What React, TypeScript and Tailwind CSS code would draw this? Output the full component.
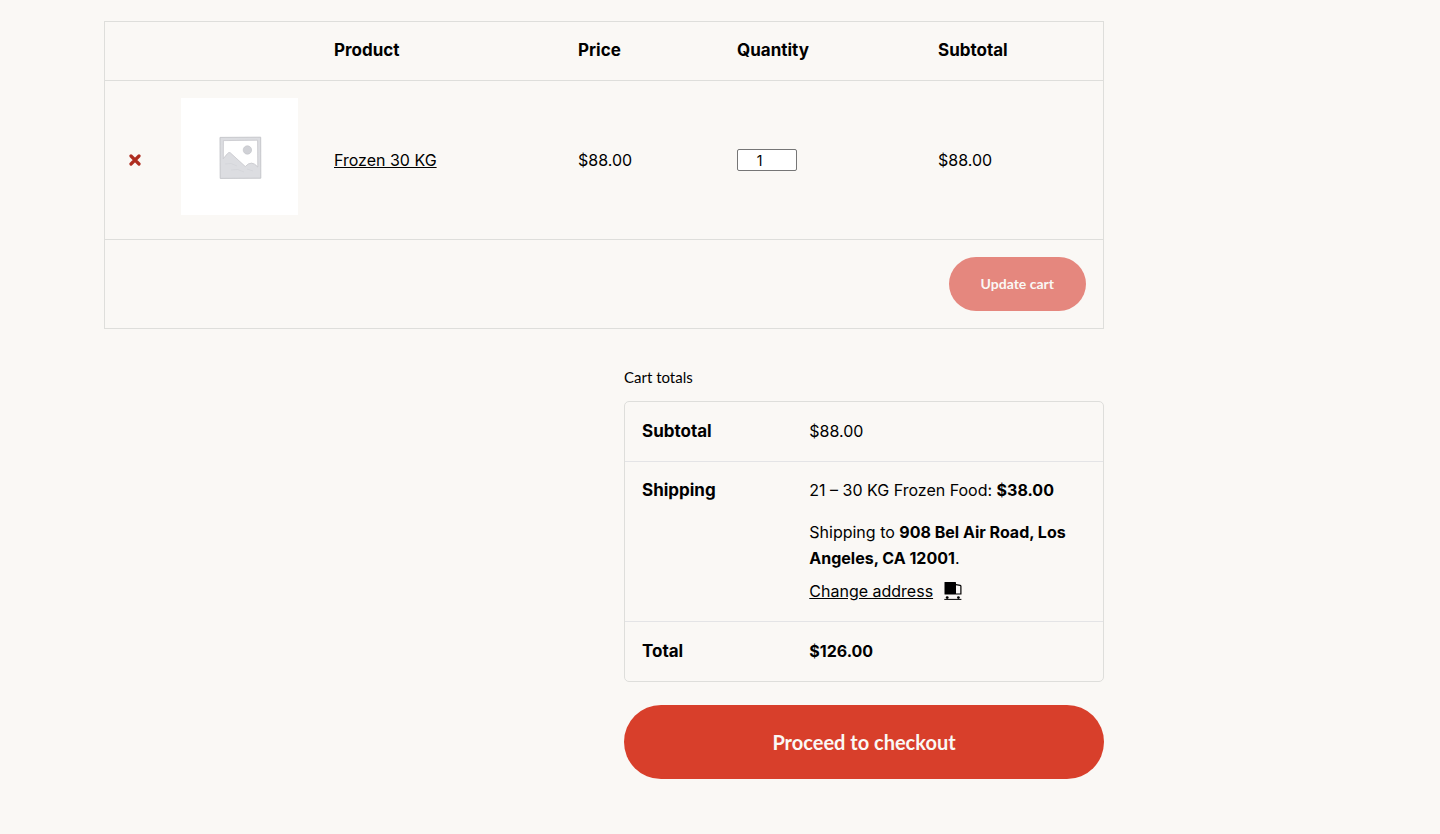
import { useState } from "react"

function PlaceholderImage() {
  return (
    <svg viewBox="0 0 117 117" className="block size-[117px] bg-white" role="img" aria-label="Placeholder">
      <path
        d="M39 39.4 L79.7 39.2 L79.8 80.2 L39.2 80.4 Z"
        fill="#dcdde1"
        stroke="#c2c3c7"
        strokeWidth="0.9"
        strokeLinejoin="round"
      />
      <path
        d="M42.4 42.6 L76.6 42.2 L76.8 69 Q70.5 61.5 64.3 68.5 L49.3 54.8 Q47.8 53.8 46.3 55.8 L42.3 60.6 Z"
        fill="#fff"
        stroke="#c6c7cb"
        strokeWidth="0.8"
        strokeLinejoin="round"
      />
      <circle cx="66.4" cy="52" r="4.2" fill="#d0d1d6" stroke="#c0c1c6" strokeWidth="0.6" />
      <path
        d="M44 66 Q50 64 56 68 M50 72 Q57 70 63 74 M66 71 L72 73"
        fill="none"
        stroke="#d3d4d9"
        strokeWidth="0.8"
      />
    </svg>
  )
}

function RemoveIcon() {
  return (
    <svg viewBox="0 0 12 12" className="size-3" aria-hidden="true">
      <path d="M2 2 L10 10 M10 2 L2 10" stroke="#ae2d20" strokeWidth="3.2" strokeLinecap="round" />
    </svg>
  )
}

function TruckIcon() {
  return (
    <svg viewBox="0 0 18 18" className="size-[18px]" aria-hidden="true">
      <rect x="0.5" y="0" width="11.5" height="12.5" rx="0.6" fill="#000" />
      <path d="M12 2.6 L16.2 3.4 Q16.9 3.6 16.9 4.3 V12 H12" fill="none" stroke="#000" strokeWidth="1.2" />
      <circle cx="3.2" cy="15.6" r="1.4" fill="#000" />
      <circle cx="14.4" cy="15.6" r="1.4" fill="#000" />
      <path d="M0.3 17.4 H17.4" stroke="#000" strokeWidth="1" />
    </svg>
  )
}

export default function CartPage() {
  const [quantity, setQuantity] = useState("1")

  return (
    <div className="min-h-screen bg-[#faf8f5] px-6 pt-[21px] pb-14 font-['Inter','Liberation_Sans',sans-serif] text-base leading-[26px] text-black lg:pl-[104px]">
      <main className="w-full max-w-[1000px]">
        <form onSubmit={(e) => e.preventDefault()}>
          <table className="w-full table-fixed border-separate border-spacing-0 border border-[#dededb] text-left">
            <colgroup>
              <col className="w-[59px]" />
              <col className="w-[153px]" />
              <col className="w-[244px]" />
              <col className="w-[159px]" />
              <col className="w-[201px]" />
              <col />
            </colgroup>
            <thead className="text-[17px]">
              <tr>
                <th aria-label="Remove item" />
                <th aria-label="Thumbnail image" />
                <th className="px-[17px] pt-[15px] pb-[17px] font-bold">Product</th>
                <th className="px-[17px] pt-[15px] pb-[17px] font-bold">Price</th>
                <th className="px-[17px] pt-[15px] pb-[17px] font-bold">Quantity</th>
                <th className="px-[17px] pt-[15px] pb-[17px] font-bold">Subtotal</th>
              </tr>
            </thead>
            <tbody>
              <tr>
                <td className="border-t border-[#dededb] text-center">
                  <button type="button" aria-label="Remove Frozen 30 KG from cart" className="inline-flex items-center">
                    <RemoveIcon />
                  </button>
                </td>
                <td className="border-t border-[#dededb] px-[17px] pt-[17px] pb-6">
                  <a href="#product"><PlaceholderImage /></a>
                </td>
                <td className="border-t border-[#dededb] px-[17px]">
                  <a href="#product" className="underline">Frozen 30 KG</a>
                </td>
                <td className="border-t border-[#dededb] px-[17px]">$88.00</td>
                <td className="border-t border-[#dededb] px-[17px]">
                  <input
                    type="number"
                    min="0"
                    aria-label="Frozen 30 KG quantity"
                    value={quantity}
                    onChange={(e) => setQuantity(e.target.value)}
                    className="block h-[22px] w-[60px] rounded-xs border border-[#767676] bg-white text-center text-sm"
                  />
                </td>
                <td className="border-t border-[#dededb] px-[17px]">$88.00</td>
              </tr>
              <tr>
                <td colSpan={6} className="border-t border-[#dededb] p-[17px]">
                  <button
                    type="submit"
                    className="ml-auto block h-[54px] rounded-full bg-[#e5877e] px-8 font-['Lato',sans-serif] text-sm font-bold text-[#faf8f5]"
                  >
                    Update cart
                  </button>
                </td>
              </tr>
            </tbody>
          </table>
        </form>

        <section className="mt-[35px] ml-auto w-full md:w-[48%]">
          <h2 className="mb-[11px] font-['Lato',sans-serif] text-[15px] leading-[26px]">Cart totals</h2>

          <div className="rounded-[5px] border border-[#dededb]">
            <table className="w-full table-fixed border-separate border-spacing-0 text-left">
              <tbody>
                <tr>
                  <th scope="row" className="w-[35%] px-[17px] pt-4 pb-[17px] align-top text-[17px] font-bold">Subtotal</th>
                  <td className="px-[17px] pt-4 pb-[17px]">$88.00</td>
                </tr>
                <tr>
                  <th scope="row" className="border-t border-[#e4e4e6] px-[17px] pt-[15px] pb-[17px] align-top text-[17px] font-bold">Shipping</th>
                  <td className="border-t border-[#e4e4e6] px-[17px] pt-[15px] pb-[17px]">
                    <p>
                      21 – 30 KG Frozen Food: <strong>$38.00</strong>
                    </p>
                    <p className="mt-4">
                      Shipping to <strong>908 Bel Air Road, Los Angeles, CA 12001</strong>.
                    </p>
                    <a href="#address" className="mt-[7px] flex items-center gap-[11px]">
                      <span className="underline">Change address</span>
                      <TruckIcon />
                    </a>
                  </td>
                </tr>
                <tr>
                  <th scope="row" className="border-t border-[#e4e4e6] px-[17px] pt-4 pb-[17px] text-[17px] font-bold">Total</th>
                  <td className="border-t border-[#e4e4e6] px-[17px] pt-4 pb-[17px] font-bold">$126.00</td>
                </tr>
              </tbody>
            </table>
          </div>

          <a
            href="#checkout"
            className="mt-[23px] flex h-[74px] items-center justify-center rounded-full bg-[#d83f2b] font-['Lato',sans-serif] text-xl font-bold text-[#faf8f5]"
          >
            Proceed to checkout
          </a>
        </section>
      </main>
    </div>
  )
}
